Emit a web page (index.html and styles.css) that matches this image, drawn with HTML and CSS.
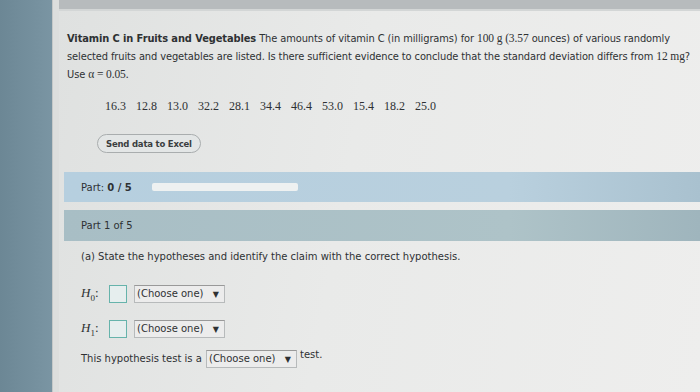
FILE: index.html
```html
<!DOCTYPE html>
<html>
<head>
<meta charset="utf-8">
<link rel="stylesheet" href="styles.css">
</head>
<body>
<div class="screen">
  <div class="sidebar"></div>
  <div class="edge"></div>
  <div class="main">
    <div class="topbar"></div>
    <div class="problem">
      <p class="statement"><b>Vitamin C in Fruits and Vegetables</b> The amounts of vitamin C (in milligrams) for <span class="serif">100 g (3.57</span> ounces) of various randomly<br>selected fruits and vegetables are listed. Is there sufficient evidence to conclude that the standard deviation differs from <span class="serif">12 mg</span>?<br>Use <span class="serif">α = 0.05.</span></p>
      <div class="data">16.3 12.8 13.0 32.2 28.1 34.4 46.4 53.0 15.4 18.2 25.0</div>
      <button class="excel">Send data to Excel</button>
    </div>
    <div class="partbar">
      <span>Part: <b>0 / 5</b></span>
      <div class="progress"></div>
    </div>
    <div class="partof">Part 1 of 5</div>
    <div class="question">
      <p class="qa">(a) State the hypotheses and identify the claim with the correct hypothesis.</p>
      <div class="hrow"><span class="h"><i>H</i><sub>0</sub>:</span><span class="box"></span><span class="select">(Choose one) <span class="tri">▼</span></span></div>
      <div class="hrow"><span class="h"><i>H</i><sub>1</sub>:</span><span class="box"></span><span class="select">(Choose one) <span class="tri">▼</span></span></div>
      <div class="trow">This hypothesis test is a <span class="select sel3">(Choose one) <span class="tri">▼</span></span> <span class="test">test.</span></div>
    </div>
  </div>
</div>
</body>
</html>
```
FILE: styles.css
```css
html, body { margin: 0; padding: 0; }
body { width: 700px; height: 392px; overflow: hidden; font-family: "DejaVu Sans", Verdana, sans-serif; color: #2e3133; }
.screen { display: flex; height: 392px; }
.sidebar { width: 52px; background: linear-gradient(90deg, #6c8795, #7a95a3); flex: none; }
.edge { width: 6px; background: #dcdedd; border-left: 1px solid #c4c8c8; flex: none; }
.main { flex: 1; display: flex; flex-direction: column; background: linear-gradient(100deg, #dfe1e0 0%, #e9eae9 45%, #eeeeed 100%); overflow: hidden; }
.topbar { height: 9px; background: #b7bbbd; border-bottom: 2px solid #d3d6d6; }
.problem { padding: 19px 0 0 8px; }
.statement { margin: 0; font-size: 9.9px; line-height: 18px; letter-spacing: -0.1px; white-space: nowrap; }
.statement b { font-weight: bold; }
.serif { font-family: "Liberation Serif", "Times New Roman", serif; font-size: 11.5px; line-height: 10px; }
.data { margin: 15px 0 0 38px; font-family: "Liberation Serif", "Times New Roman", serif; font-size: 12px; word-spacing: 7px; }
.excel { margin: 20px 0 0 30px; display: block; height: 19px; padding: 0 8px; border: 1px solid #a9adae; border-radius: 10px; background: #e3e6e6; font-family: "DejaVu Sans", sans-serif; font-size: 8.5px; font-weight: bold; color: #3a3d3f; letter-spacing: -0.2px; }
.partbar { margin: 19px 0 0 5px; height: 30px; background: linear-gradient(90deg, #b6cfdf, #b9d0de 70%, #a9c1cf); display: flex; align-items: center; padding-left: 17px; font-size: 10px; }
.partbar b { font-weight: bold; }
.progress { width: 146px; height: 8px; margin-left: 20px; background: #eef1f1; border-radius: 2px; }
.partof { margin: 8px 0 0 5px; height: 31px; background: linear-gradient(90deg, #a8bec5, #aec3c8 70%, #9fb5bd); display: flex; align-items: center; padding-left: 17px; font-size: 10px; }
.question { padding: 9px 0 0 22px; font-size: 10px; }
.qa { margin: 0; line-height: 14px; }
.hrow { display: flex; align-items: center; margin-top: 21px; height: 18px; }
.hrow + .hrow { margin-top: 17px; }
.h { font-family: "Liberation Serif", serif; font-size: 13px; width: 28px; }
.h sub { font-size: 9px; font-style: normal; }
.box { width: 16px; height: 16px; border: 1px solid #66b3ab; background: #e6eeee; margin-right: 7px; }
.select { display: inline-block; height: 16px; line-height: 16px; border: 1px solid #b7babb; border-top-color: #999; padding: 0 5px 0 2px; background: #ececec; font-size: 10px; }
.tri { font-size: 8px; margin-left: 6px; }
.trow { margin-top: 12px; }
.sel3 { margin-left: 1px; }
.test { position: relative; top: -4px; }
```
